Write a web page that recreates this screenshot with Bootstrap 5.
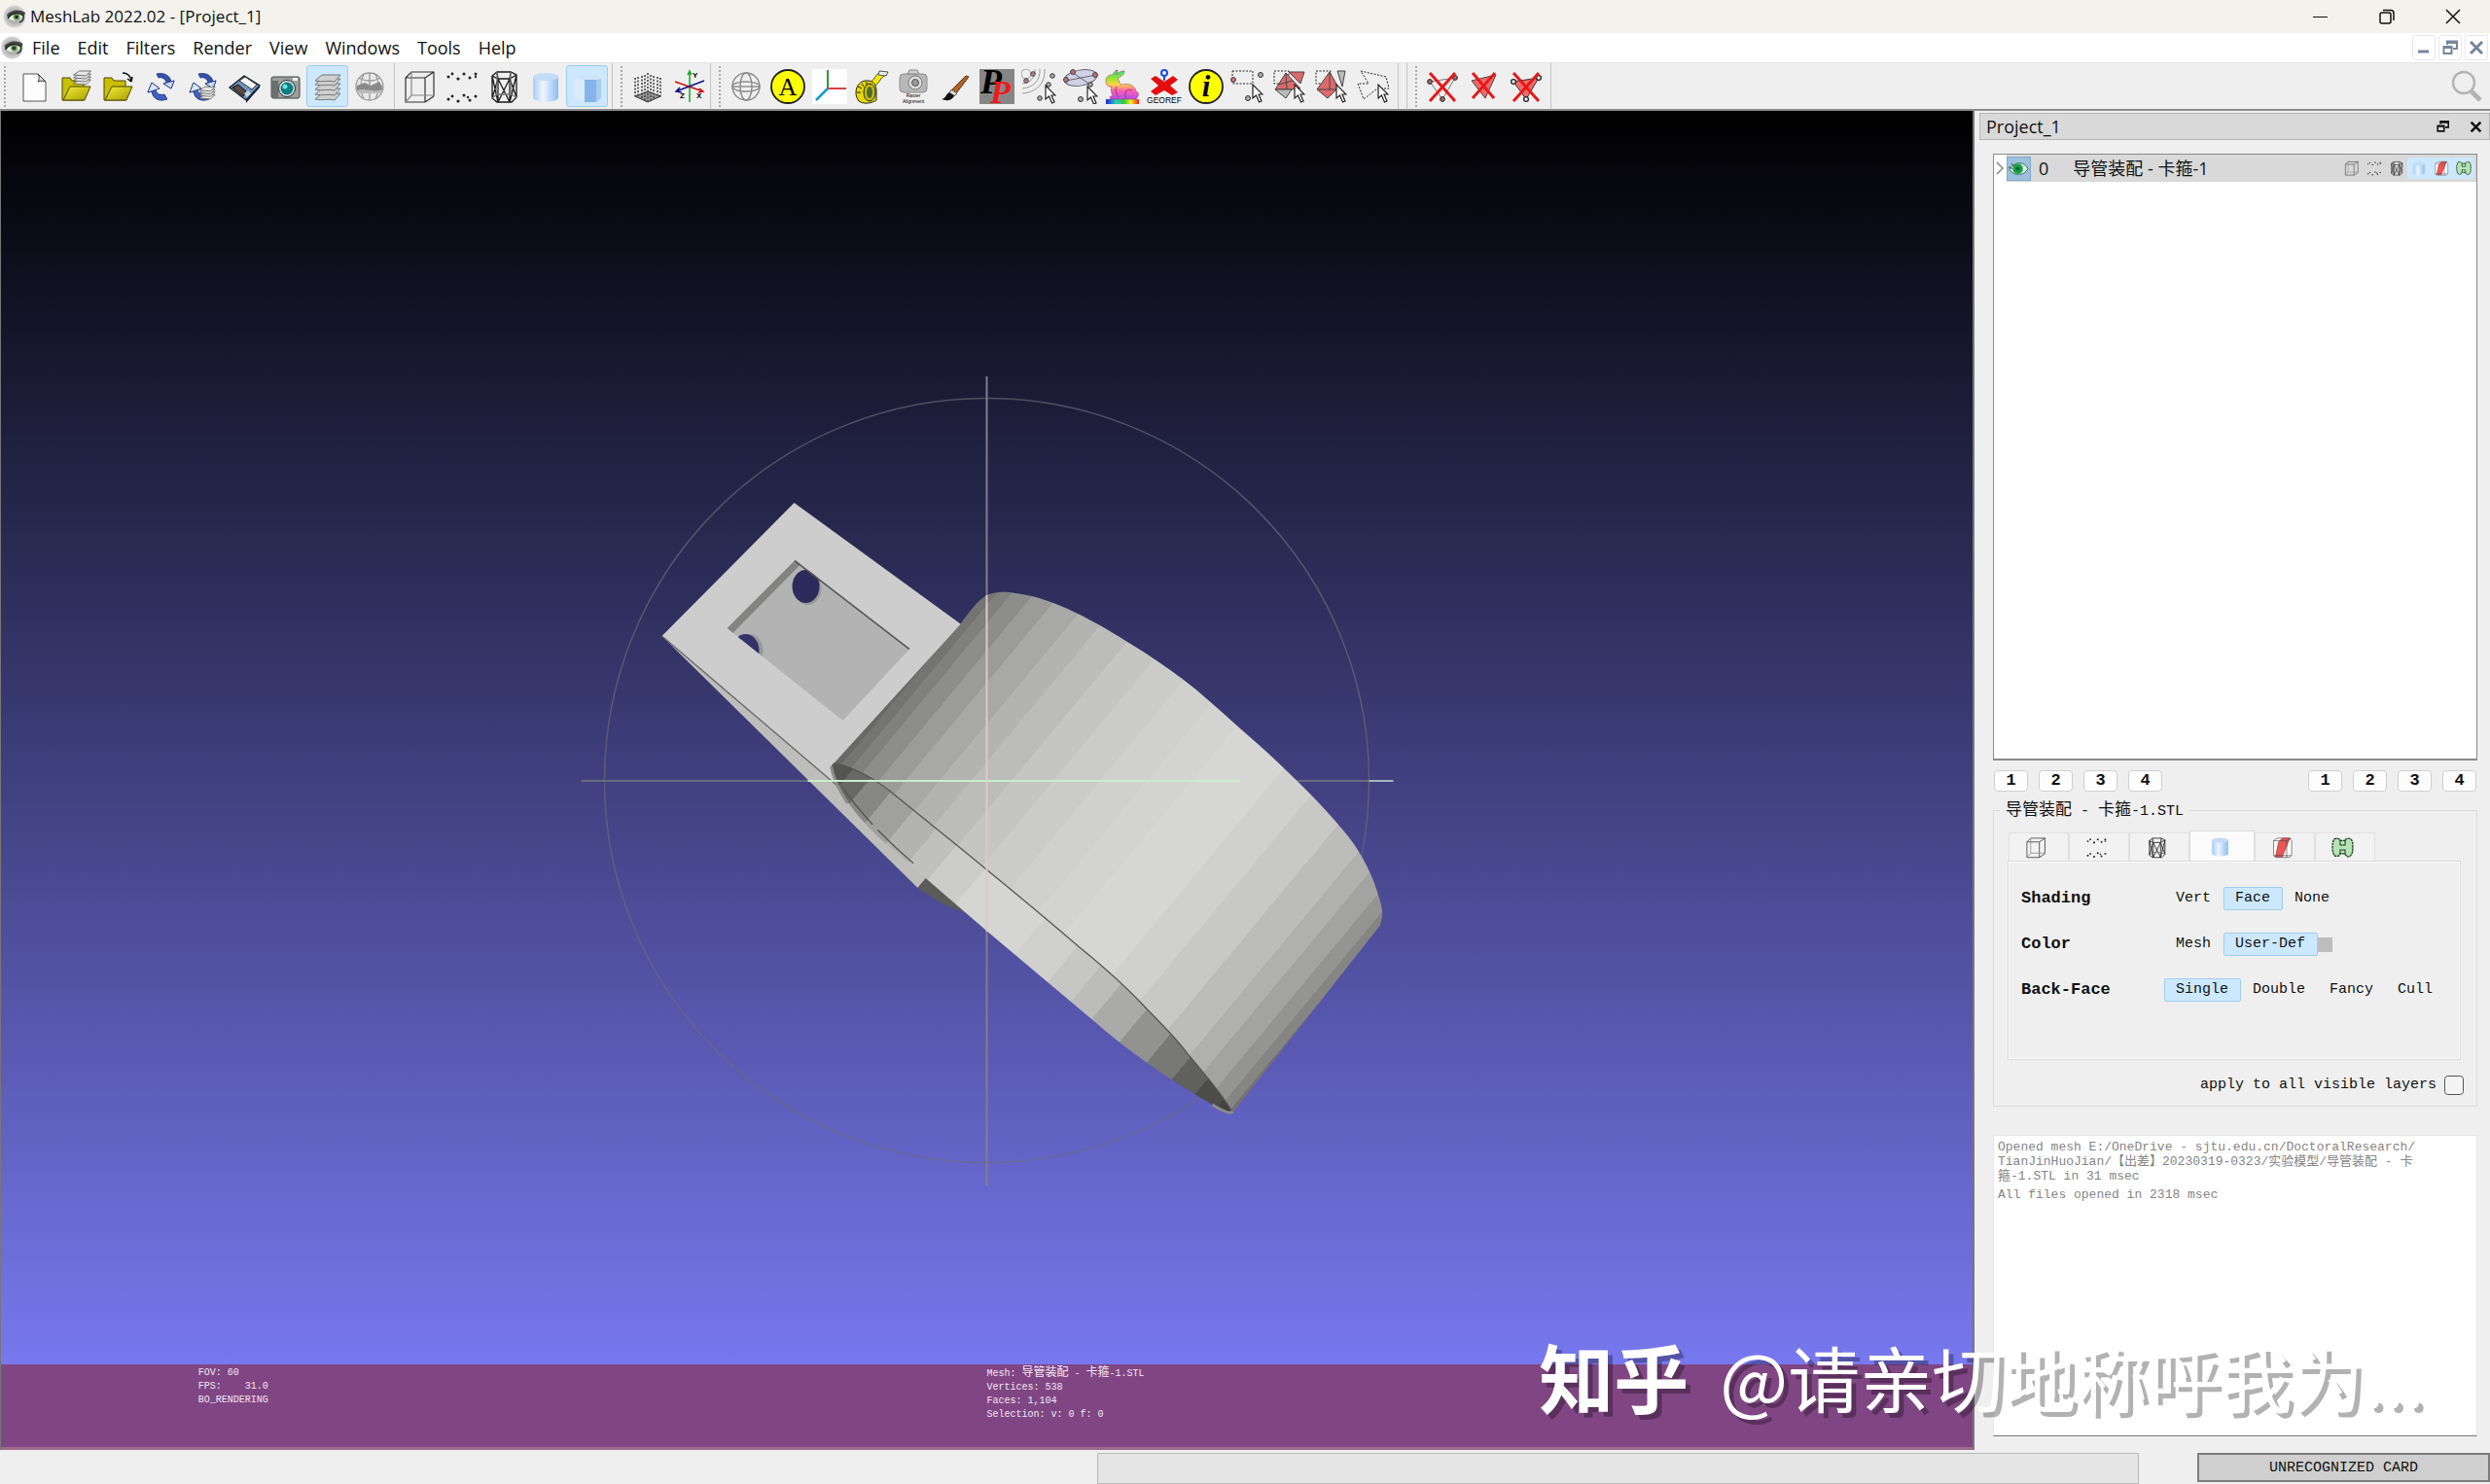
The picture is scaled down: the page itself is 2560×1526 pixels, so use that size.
<!DOCTYPE html>
<html lang="en">
<head>
<meta charset="utf-8">
<meta name="viewport" content="width=device-width, initial-scale=1">
<title>MeshLab 2022.02 - [Project_1]</title>
<link href="https://cdn.jsdelivr.net/npm/bootstrap@5.3.0/dist/css/bootstrap.min.css" rel="stylesheet">
<style>
body{font-family:"Open Sans","Noto Sans CJK SC",sans-serif;font-size:18px;line-height:24px;color:#111;background:#efefef}
svg{display:block;flex:none}
.plain{border:0;background:none;padding:0;color:inherit}
.mono{font-family:"Liberation Mono","Noto Sans CJK SC",monospace;font-size:15px}
.zh{font-size:17px}
.title-strip{height:34px;background:#f4f2ed;font-size:17px;padding-left:3px}
.win-btn{width:68px;height:34px}
.menu-strip{height:30px;background:#fff}
.menu-strip .nav{gap:2px}
.menu-strip .nav-link{padding:0 8px;color:#111;line-height:30px}
.mdi-set{gap:3px;color:#75869c;margin-right:2px}
.mdi-btn{width:24px;height:26px;border:1px solid #e4e8ee;border-radius:3px;background:#fff;color:inherit}
.tool-strip{height:50px;border-bottom:2px solid #8c8c8c;border-top:1px solid #e4e4e4}
.tool{width:43px;height:43px;border:1px solid transparent;background:none;padding:0;border-radius:3px}
.tool.on{background:#cce8ff;border-color:#99cdf2}
.vsep{width:1px;height:47px;background:#c4c4c4}
.grip{width:2px;height:42px;background:repeating-linear-gradient(#aaa 0 2px,transparent 2px 4px)}
.gl-view{background:linear-gradient(#000,#8080ff);border:solid #777;border-width:0 2px 0 1px;min-width:0}
.hud{height:88px;background:#804684;border-bottom:3px solid #9d6b8b;color:#f3e6f3;font-size:10px;line-height:14px;padding-top:2px;white-space:pre}
.hud .zh{font-size:12px}
.hud-a{padding-left:10%}
.side{width:530px;padding-left:5px}
.dock-title{height:28px;background:#d9d9d9;border:1px solid #b5b5b5;padding:0 6px;margin-top:2px}
.side-body{padding:14px 13px 14px 14px}
.layer-list{background:#fff;border:2px solid #8a8a8a;border-width:1px 1px 2px 1px}
.layer-row{height:28px;background:#d9d9d9;padding-right:2px}
.layer-name{margin-left:25px}
.eye-box{width:25px;height:25px;background:#9cc0dd;border:1px solid #82a9ca}
.mini{width:23px;height:22px;border-radius:2px}
.mini.on{background:#cce8ff}
.num-bar{margin-top:10px;padding:0 1px}
.num-set{gap:11px}
.num-btn{width:35px;height:22px;border:1px solid #cfcfcf;border-radius:4px;background:#fdfdfd;font-weight:700;line-height:18px;padding:0;font-size:17px;color:#111}
.group-box{border:1px solid #dadada;padding:0 16px 9px 14px;margin-top:19px}
.group-title{background:#efefef;padding:0 6px;margin:-12px 0 7px -8px;align-self:flex-start;line-height:24px}
.nav-tabs{border:0;padding-left:1px}
.nav-tabs .nav-link{width:62px;height:29px;padding:0 5px 0 0;border:1px solid #e0e0e0;border-bottom:0;border-radius:0;background:#f2f2f2;margin:0}
.nav-tabs .nav-link.active{width:67px;height:31px;background:#fbfbfb;border-color:#dedede}
.pane{border:1px solid #dcdcdc;box-shadow:inset 0 0 0 1px #fafafa;height:205px;padding:26px 0 0 13px}
.opt-row{height:24px;margin-bottom:23px}
.opt-name{width:147px;font-weight:700;font-size:17px}
.opt{border:1px solid transparent;border-radius:2px;padding:0 12px 0 11px;line-height:22px;height:24px}
.btn-check:checked+.opt{background:#cce8ff;border-color:#9fcdee}
.swatch{width:15px;height:15px;background:#bdbdbd;border:0;padding:0}
.apply-line{margin:14px -3px 0 0}
.apply-box{width:20px;height:20px;margin:0;border:1px solid #555;border-radius:4px;background-color:#f4f4f4}
.log-box{height:310px;margin-top:29px;background:#fff;border:1px solid #e6e6e6;border-bottom:1px solid #777;padding:4px 50px 0 4px;font-size:13px;line-height:15px;color:#858585}
.log-box p{margin:0 0 4px}
.status-strip{height:35px;padding-top:3px}
.progress-slot{width:1071px;height:32px;background:#e5e5e5;border:1px solid #b8b8b8;margin-right:60px}
.card-slot{width:301px;height:30px;background:#cfcfcf;border:2px solid #7d7d7d;text-align:center;line-height:28px}
.stamp{position:absolute;right:68px;bottom:61px;color:#fff;font-family:"Noto Sans CJK SC",sans-serif;font-size:74px;line-height:100px;text-shadow:5px 5px 0 rgba(0,0,0,.3);pointer-events:none;white-space:nowrap;gap:32px}
.stamp b{font-size:77px}
</style>
<script src="https://cdn.jsdelivr.net/npm/bootstrap@5.3.0/dist/js/bootstrap.bundle.min.js"></script>
</head>
<body>
<svg width="0" height="0" class="position-absolute" aria-hidden="true">
<defs>
<linearGradient id="gBlue"><stop offset="0" stop-color="#a9cdf4"/><stop offset=".4" stop-color="#eef6ff"/><stop offset="1" stop-color="#8dbcf0"/></linearGradient>
<linearGradient id="gFold" x1="0" y1="0" x2="1" y2="1"><stop offset="0" stop-color="#f4f03a"/><stop offset="1" stop-color="#a89c00"/></linearGradient>
<linearGradient id="gRain"><stop offset="0" stop-color="#22c"/><stop offset=".3" stop-color="#2cc"/><stop offset=".55" stop-color="#3c3"/><stop offset=".75" stop-color="#ee2"/><stop offset="1" stop-color="#e22"/></linearGradient>
<linearGradient id="gBun" x1="0" y1="0" x2="0" y2="1"><stop offset="0" stop-color="#2be08a"/><stop offset=".3" stop-color="#9be82c"/><stop offset=".5" stop-color="#ffd24a"/><stop offset=".7" stop-color="#ff5fb0"/><stop offset="1" stop-color="#b04cf0"/></linearGradient>
<radialGradient id="gEye"><stop offset="0" stop-color="#777"/><stop offset=".6" stop-color="#b5b5b5"/><stop offset="1" stop-color="#d8d8d8"/></radialGradient>
<symbol id="cursor" viewBox="0 0 12 20"><path d="M1 1v14l3.500-3 3 7 2.500-1-3-7h4z" fill="#fff" stroke="#222" stroke-width="1.200"/></symbol>
<symbol id="logo" viewBox="0 0 24 24"><circle cx="12" cy="12" r="11.500" fill="url(#gEye)"/><path d="M4 10C9 5 17 4 23 8l-1 3C16 7 9 8 5 13z" fill="#444"/><path d="M6 14c3-5 10-6 14-2-3 5-10 6-14 2z" fill="#e8efe4"/><circle cx="14" cy="12.500" r="3.300" fill="#5b9a4a"/><circle cx="14" cy="12.500" r="1.400" fill="#111"/><path d="M5 14c4-6 11-7 16-3 1 4-1 6-4 7" fill="none" stroke="#222" stroke-width="1.400"/></symbol>
<symbol id="i-new" viewBox="0 0 36 36"><path d="M6 5h15l8 8v20H6z" fill="#fdfdfd" stroke="#555"/><path d="M21 5c2 3 1 6 0 8 3-1 6-1 8 0z" fill="#ddd" stroke="#333"/></symbol>
<symbol id="i-open" viewBox="0 0 36 36"><path d="M3 9h8l2 3h12v20H3z" fill="#c9c000" stroke="#4d4700"/><path d="M4 32l7-14h21l-6 14z" fill="url(#gFold)" stroke="#4d4700"/></symbol>
<symbol id="i-sheets" viewBox="0 0 20 18"><g fill="#e4e4e4" stroke="#555" stroke-width=".8"><path d="M1 14l6-4h12l-5 5z"/><path d="M1 11l6-4h12l-5 5z"/><path d="M1 8l6-4h12l-5 5z"/><path d="M1 5l6-4h12l-5 5z"/></g></symbol>
<symbol id="i-openm" viewBox="0 0 36 36"><use href="#i-open"/><use href="#i-sheets" x="13" y="1" width="21" height="18"/></symbol>
<symbol id="i-imp" viewBox="0 0 36 36"><use href="#i-open"/><path d="M22 4c5 0 8 3 9 8m0 1l-4-3m4 3l1-5" fill="none" stroke="#111" stroke-width="1.500"/></symbol>
<symbol id="i-reload" viewBox="0 0 36 36"><path d="M14 5c8-2 14 2 15 8l3-1-3 8-8-5 3-1c-1-4-4-6-8-5z" fill="#3453ad" stroke="#1b2e73" stroke-width=".8"/><path d="M25 31c-8 3-15 0-16-8l-4 1 4-10 8 6-4 1c1 5 5 6 9 5z" fill="#3f5fc0" stroke="#1b2e73" stroke-width=".8"/><path d="M5 24l4-10 8 6z" fill="#dce6fb" stroke="#1b2e73" stroke-width=".8"/><path d="M32 12l-3 8-8-5z" fill="#cfdcf8" stroke="#1b2e73" stroke-width=".8"/></symbol>
<symbol id="i-reloadm" viewBox="0 0 36 36"><use href="#i-reload"/><use href="#i-sheets" x="14" y="17" width="18" height="17"/></symbol>
<symbol id="i-save" viewBox="0 0 36 36"><path d="M3 19L18 7l16 10-14 15z" fill="#6f96c2" stroke="#151b25" stroke-width="1.300"/><path d="M13 12l6-4 12 8-5 5z" fill="#f7f7f7" stroke="#333"/><path d="M6 19l6-3 8 7-3 5z" fill="#5a4a40" stroke="#111"/><path d="M18 25l4-3 3 3-4 4z" fill="#c9d4df"/><path d="M20 32l14-15v2L20 35z" fill="#1b2533"/></symbol>
<symbol id="i-cam" viewBox="0 0 36 36"><rect x="3" y="8" width="29" height="22" rx="2" fill="#999e9e" stroke="#444"/><rect x="3" y="12" width="7" height="17" fill="#6c6f6f"/><rect x="25" y="9" width="5" height="3" fill="#eee"/><circle cx="19" cy="20" r="8.500" fill="#ddd" stroke="#333"/><circle cx="19" cy="20" r="6.500" fill="#087f83"/><circle cx="17" cy="18" r="2.500" fill="#6fe0dd"/></symbol>
<symbol id="i-layers" viewBox="0 0 36 36"><g fill="#cfcfcf" stroke="#777" stroke-width="1"><path d="M5 31l7-6h19l-6 7c-7-2-12 1-20-1z"/><path d="M5 26l7-6h19l-6 7c-7-2-12 1-20-1z"/><path d="M5 21l7-6h19l-6 7c-7-2-12 1-20-1z"/><path d="M5 16l7-6h19l-6 7c-7-2-12 1-20-1z"/><path d="M5 12l7-6h19l-6 7c-7-2-12 1-20-1z"/></g></symbol>
<symbol id="i-globe" viewBox="0 0 36 36"><g fill="none" stroke="#8b8b8b" stroke-width="1.400"><circle cx="18" cy="18" r="14"/><ellipse cx="18" cy="18" rx="6" ry="14"/><path d="M4 18h28"/><ellipse cx="18" cy="18" rx="14" ry="5"/></g></symbol>
<symbol id="i-raster" viewBox="0 0 36 36"><g fill="#e9e9e9" stroke="#999" stroke-width="1.300"><circle cx="18" cy="18" r="14"/><path d="M18 4v28M7 9c6 4 16 4 22 0M12 5c-4 8-4 18 0 26M24 5c4 8 4 18 0 26" fill="none"/></g><path d="M5 17l8-3 6 3 9-4 3 5v7H5z" fill="#8a8a8a"/><path d="M5 22c8-3 17 3 26-1v4H5z" fill="#bbb"/></symbol>
<symbol id="i-box" viewBox="0 0 36 36"><g fill="none" stroke="#333" stroke-width="1.200"><path d="M3 9h20v25H3zM10 3h22v25M3 9l6-6h1M23 9l9-6M23 34l9-6"/><path d="M9 3v24h23M9 27l-6 7" stroke="#888"/></g></symbol>
<symbol id="i-pts" viewBox="0 0 36 36"><g fill="#222"><circle cx="4" cy="8" r="1.500"/><circle cx="8" cy="5" r="1.400"/><circle cx="14" cy="10" r="1.600"/><circle cx="20" cy="5" r="1.500"/><circle cx="26" cy="9" r="1.500"/><circle cx="32" cy="5" r="1.500"/><circle cx="32" cy="8" r="1.200"/><circle cx="4" cy="31" r="1.500"/><circle cx="8" cy="28" r="1.400"/><circle cx="14" cy="33" r="1.600"/><circle cx="20" cy="27" r="1.500"/><circle cx="26" cy="32" r="1.500"/><circle cx="32" cy="28" r="1.500"/><circle cx="24" cy="29" r="1.200"/></g></symbol>
<symbol id="i-wire" viewBox="0 0 36 36"><g fill="none" stroke="#1c1c1c" stroke-width="1.300"><path d="M6 7l5-4h14l6 3v23l-5 5H11l-5-4zM6 7l6 3h12l7-4M12 10v24M24 10v24M11 3l1 7M25 3l-1 7M6 30l6-20 12 24M24 10L12 34M31 29l-7-19M6 7l6 27M31 6l-7 28"/><path d="M11 3v23h14V3M6 30l5-4M25 26l6 3" stroke="#777"/></g></symbol>
<symbol id="i-cyl" viewBox="0 0 36 36"><path d="M5 8v22c3 5 23 5 26 0V8z" fill="url(#gBlue)"/><ellipse cx="18" cy="8" rx="13" ry="4" fill="#c3dcf7"/></symbol>
<symbol id="i-flat" viewBox="0 0 36 36"><path d="M4 10l6-4h17l5 4v20l-5 4H14l-10-4z" fill="#cfe3f8"/><path d="M4 10l11 1v23l-11-4z" fill="#dbeafb"/><path d="M15 11h12v23H15z" fill="#84b4ea"/><path d="M27 11l5-1v20l-5 4z" fill="#a9cbf1"/></symbol>
<symbol id="i-grid" viewBox="0 0 36 36"><path d="M5 28l13-5 13 5-13 6z" fill="#999" stroke="#333"/><g fill="none" stroke="#444" stroke-width="1.600" stroke-dasharray="2 1.500"><path d="M5 9v20M8 8v22M12 7v24M15 6v26M18 4v29M21 6v26M24 7v24M28 8v22M31 9v20"/></g></symbol>
<symbol id="i-axes" viewBox="0 0 36 36"><g fill="none" stroke-width="1.500"><path d="M18 34V3m-2 3l2-4 2 4" stroke="#19a82a"/><path d="M3 13l29 10m-4-3l4 3-5 1" stroke="#c11"/><path d="M33 12L4 23m4-4l-4 4 6 1" stroke="#118"/></g><g font-family="Liberation Sans" font-size="8" font-weight="700"><text x="21" y="9">Y</text><text x="8" y="30">Z</text><text x="25" y="30">X</text></g></symbol>
<symbol id="i-A" viewBox="0 0 36 36"><circle cx="18" cy="18" r="17" fill="#ff0" stroke="#222" stroke-width="1.800"/><text x="18" y="27" font-family="Liberation Serif" font-size="26" text-anchor="middle">A</text></symbol>
<symbol id="i-info" viewBox="0 0 36 36"><circle cx="18" cy="18" r="17" fill="#ff0" stroke="#222" stroke-width="1.800"/><text x="18" y="28" font-family="Liberation Serif" font-size="31" font-weight="700" font-style="italic" text-anchor="middle">i</text></symbol>
<symbol id="i-tri" viewBox="0 0 36 36"><path d="M0 0h36v36H0z" fill="#fff"/><g fill="none" stroke-width="2"><path d="M16 20V1" stroke="#2a9b3f"/><path d="M16 20h19" stroke="#d8404a"/><path d="M16 20L4 32" stroke="#159ccb" stroke-width="2.500"/></g></symbol>
<symbol id="i-tape" viewBox="0 0 36 36"><path d="M12 13c9 2 8-6 15-10l7 3c-8 1-7 12-17 12z" fill="#f1ea00" stroke="#444"/><path d="M26 2l9 1-2 4-8-1z" fill="#eee" stroke="#555"/><path d="M2 24c0-8 6-13 13-12 6 1 8 5 8 10v10c-6 4-14 4-18 1-2-3-3-5-3-9z" fill="#e6d900" stroke="#222"/><ellipse cx="16" cy="24" rx="6" ry="9" fill="#c5bd00" stroke="#222"/><ellipse cx="16" cy="24" rx="3" ry="6" fill="#4f6d30"/><path d="M4 18l4 2m-5 4h4m1-9l2 3m3-5v3" stroke="#222"/></symbol>
<symbol id="i-align" viewBox="0 0 36 36"><rect x="4" y="5" width="28" height="19" rx="4" fill="#b8b8b8" stroke="#8b8b8b"/><path d="M12 5l2-4h8l2 4z" fill="#ccc" stroke="#888"/><circle cx="20" cy="14" r="7" fill="#ddd" stroke="#777"/><circle cx="20" cy="14" r="3.500" fill="#999" stroke="#555"/><g font-family="Liberation Sans" font-size="5" text-anchor="middle"><text x="18" y="29">Raster</text><text x="18" y="35">Alignment</text></g></symbol>
<symbol id="i-brush" viewBox="0 0 36 36"><path d="M14 22L29 7l3 1-13 17z" fill="#b0622a" stroke="#5a2f0e"/><path d="M14 21l6 4-3 3-5-3z" fill="#ddd" stroke="#555"/><path d="M12 24l5 3c-2 6-8 6-13 4 5-1 4-5 8-7z" fill="#111"/></symbol>
<symbol id="i-pp" viewBox="0 0 36 36"><path d="M0 0h36v36H0z" fill="#868686"/><g font-family="Liberation Serif" font-weight="700" font-style="italic"><text x="1" y="25" font-size="36">P</text><text x="11" y="35" font-size="34" fill="#f01818">P</text></g></symbol>
<symbol id="i-rings" viewBox="0 0 36 36"><g fill="none" stroke="#9a9a9a"><circle cx="5" cy="5" r="5"/><path d="M14 0c1 9-5 14-13 15M19 0c1 12-7 19-18 20M24 0c1 15-9 24-23 25"/></g><g fill="#b9808a" stroke="#444"><circle cx="12" cy="5" r="2.300"/><circle cx="5" cy="12" r="2.300"/></g><g fill="#aaa" stroke="#333"><circle cx="32" cy="7" r="2.300"/><circle cx="28" cy="16" r="2.300"/><circle cx="19" cy="30" r="2.300"/></g><use href="#cursor" x="24" y="16" width="12" height="20"/></symbol>
<symbol id="i-ell" viewBox="0 0 36 36"><ellipse cx="18" cy="9" rx="17" ry="8" transform="rotate(-10 18 9)" fill="#cfd2e6" stroke="#666"/><path d="M10 4l18 12M3 12L34 6" stroke="#666"/><g fill="#b9707a" stroke="#444"><circle cx="3" cy="11" r="2.500"/><circle cx="10" cy="3" r="2.500"/><circle cx="33" cy="6" r="2.500"/></g><g fill="#aaa" stroke="#333"><circle cx="28" cy="16" r="2.300"/><circle cx="18" cy="31" r="2.500"/></g><use href="#cursor" x="24" y="17" width="12" height="20"/></symbol>
<symbol id="i-bunny" viewBox="0 0 36 36"><path d="M1 31h34v5H1z" fill="url(#gRain)"/><path d="M1 12c0-4 3-6 7-6 1-3 3-5 5-5 0 2-1 4-2 5 3-3 6-4 9-4 0 4-4 6-7 7 2 3 1 6 4 7 8-2 14 1 15 7 3 1 3 3 2 5l-2 3H6c-2-1-1-3 2-4-2-3-2-6-1-9-4 1-6-2-6-6z" fill="url(#gBun)" stroke="#a45" stroke-width=".6"/><path d="M22 30c-4-6 2-11 6-8M12 18c-2 4 0 8 2 11" fill="none" stroke="#903c70"/></symbol>
<symbol id="i-geo" viewBox="0 0 36 36"><path d="M4 10l5-3 9 6 9-6 5 4-8 6 8 7-6 3-8-5-9 5-5-4 8-6z" fill="#e60d0d"/><circle cx="18" cy="4" r="3" fill="none" stroke="#1d4fe0" stroke-width="2"/><path d="M18 7v5" stroke="#1d4fe0" stroke-width="2"/><text x="18" y="35" font-family="Liberation Sans" font-size="8.500" text-anchor="middle">GEOREF</text></symbol>
<symbol id="i-selv" viewBox="0 0 36 36"><path d="M2 2h21v13H2z" fill="none" stroke="#222" stroke-dasharray="2 1.500"/><circle cx="3" cy="11" r="2.500" fill="#d07070" stroke="#444"/><g fill="#aaa" stroke="#333"><circle cx="31" cy="6" r="2.500"/><circle cx="18" cy="30" r="2.500"/></g><use href="#cursor" x="22" y="15" width="12" height="20"/></symbol>
<symbol id="i-self" viewBox="0 0 36 36"><path d="M2 2h15v13H2z" fill="none" stroke="#222" stroke-dasharray="2 1.500"/><path d="M3 21L14 4l15 16-9 1z" fill="#dd6a6a" stroke="#444"/><path d="M17 3h16l-4 12z" fill="#dd6a6a" stroke="#444"/><path d="M3 21h17l-6 9z" fill="#bbb" stroke="#444"/><path d="M14 4l1 17m-9-5l15-4" stroke="#444"/><use href="#cursor" x="22" y="15" width="12" height="20"/></symbol>
<symbol id="i-selc" viewBox="0 0 36 36"><path d="M2 2h15v13H2z" fill="none" stroke="#222" stroke-dasharray="2 1.500"/><path d="M3 21L16 3l9 16-11 11z" fill="#dd6a6a" stroke="#444"/><path d="M3 21h21M16 3v18" stroke="#444"/><path d="M24 2h8l-3 16z" fill="#bbb" stroke="#444"/><use href="#cursor" x="22" y="15" width="12" height="20"/></symbol>
<symbol id="i-poly" viewBox="0 0 36 36"><path d="M5 2l26 6 3 12-12 0-14 11-6-16h11z" fill="none" stroke="#222" stroke-dasharray="2 1.500"/><use href="#cursor" x="22" y="15" width="12" height="20"/></symbol>
<symbol id="i-x" viewBox="0 0 36 36"><path d="M5 4l26 29M31 4L5 33" stroke="#e81818" stroke-width="3"/></symbol>
<symbol id="i-delv" viewBox="0 0 36 36"><path d="M5 13l26-4-13 22z" fill="#eee" stroke="#777"/><g fill="#a06a6a" stroke="#222"><circle cx="5" cy="13" r="2.400"/><circle cx="31" cy="9" r="2.400"/><circle cx="18" cy="31" r="2.400"/></g><use href="#i-x"/></symbol>
<symbol id="i-delf" viewBox="0 0 36 36"><path d="M5 12l25-6-11 24z" fill="#f06a6a" stroke="#444"/><path d="M6 4l22 26M29 4L6 30" stroke="#e81818" stroke-width="3"/></symbol>
<symbol id="i-delb" viewBox="0 0 36 36"><path d="M5 13l26-4-13 22z" fill="#f06a6a" stroke="#333"/><g fill="#eee" stroke="#222" stroke-width="1.300"><circle cx="5" cy="13" r="2.400"/><circle cx="31" cy="9" r="2.400"/><circle cx="18" cy="31" r="2.400"/></g><use href="#i-x"/></symbol>
<symbol id="i-red" viewBox="0 0 36 36"><path d="M4 7l6-4h20l3 4v24l-4 3H7l-3-3z" fill="#fff" stroke="#444"/><path d="M12 9L18 3h12L18 33H7z" fill="#ea5555" stroke="#933"/><path d="M4 7h21v27M25 7l7-4M4 31h28" fill="none" stroke="#444"/></symbol>
<symbol id="i-bnd" viewBox="0 0 36 36"><path d="M5 4c5-2 8 0 9 3h8c1-3 4-5 9-3 3 3 4 9 3 14 1 6-1 11-4 14-4 2-7 0-8-4h-8c-1 4-5 5-9 3-4-4-5-22 0-27z" fill="#b5e3b6" stroke="#1c3a1f" stroke-width="2" stroke-dasharray="4 1"/><path d="M14 5v9h8V5m-8 24v-7h8v7" fill="none" stroke="#1c3a1f" stroke-width="1.600"/></symbol>
<symbol id="i-eye" viewBox="0 0 24 24"><path d="M2 13c3-5 7-7 11-7s7 2 9 6c-3 5-6 6-10 6s-7-1-10-5z" fill="#d8eedd" stroke="#3a6a50"/><circle cx="11" cy="12" r="5.500" fill="#18a04c"/><circle cx="11" cy="12" r="2.200" fill="#063"/><path d="M1 10l4 2M4 6l3 4" stroke="#26543d"/></symbol>
<symbol id="i-restore" viewBox="0 0 16 16"><path d="M5 5V1.500h10V9h-4M5 3h10" fill="none" stroke="currentColor" stroke-width="2"/><path d="M1.500 7h8v7h-8zM1.500 8h8" fill="none" stroke="currentColor" stroke-width="2"/></symbol>
<symbol id="i-close" viewBox="0 0 16 16"><path d="M2 2l12 12M14 2L2 14" stroke="currentColor" stroke-width="3"/></symbol>
</defs>
</svg>

<div class="vh-100 d-flex flex-column overflow-hidden position-relative">
  <header>
    <div class="title-strip d-flex align-items-center">
      <svg width="24" height="24"><use href="#logo"/></svg>
      <span class="ms-1">MeshLab 2022.02 - [Project_1]</span>
      <div class="ms-auto d-flex">
        <button class="plain win-btn d-flex justify-content-center align-items-center" aria-label="Minimize"><svg width="16" height="16"><path d="M0 8.500h15" stroke="#111"/></svg></button>
        <button class="plain win-btn d-flex justify-content-center align-items-center" aria-label="Restore"><svg width="16" height="16" fill="none" stroke="#111" stroke-width="1.500"><rect x="1" y="4" width="11" height="11" rx="2"/><path d="M4 1.500h8q3 0 3 3V12"/></svg></button>
        <button class="plain win-btn d-flex justify-content-center align-items-center me-1" aria-label="Close"><svg width="16" height="16"><path d="M1 1l14 14M15 1L1 15" stroke="#111" stroke-width="1.500"/></svg></button>
      </div>
    </div>
    <div class="menu-strip d-flex align-items-center">
      <svg width="25" height="24"><use href="#logo"/></svg>
      <nav class="nav">
        <a class="nav-link" href="#">File</a><a class="nav-link" href="#">Edit</a><a class="nav-link" href="#">Filters</a><a class="nav-link" href="#">Render</a><a class="nav-link" href="#">View</a><a class="nav-link" href="#">Windows</a><a class="nav-link" href="#">Tools</a><a class="nav-link" href="#">Help</a>
      </nav>
      <div class="mdi-set ms-auto d-flex">
        <button class="mdi-btn p-0 d-flex justify-content-center align-items-center" aria-label="Minimize project"><svg width="16" height="16"><path d="M2 12h11" stroke="currentColor" stroke-width="3"/></svg></button>
        <button class="mdi-btn p-0 d-flex justify-content-center align-items-center" aria-label="Restore project"><svg width="16" height="16"><use href="#i-restore"/></svg></button>
        <button class="mdi-btn p-0 d-flex justify-content-center align-items-center" aria-label="Close project"><svg width="16" height="16"><use href="#i-close"/></svg></button>
      </div>
    </div>
    <div class="tool-strip d-flex align-items-center">
      <div class="d-flex align-items-center" id="tools"></div>
      <button class="plain ms-auto me-2" aria-label="Search"><svg width="32" height="34" fill="none" stroke="#b4b4b4"><circle cx="13" cy="13" r="11" stroke-width="2.500"/><path d="M21 22l9 9" stroke-width="5"/></svg></button>
    </div>
  </header>

  <main class="flex-grow-1 d-flex" style="min-height:0">
    <section class="gl-view flex-grow-1 position-relative d-flex flex-column justify-content-end overflow-hidden">
      <svg class="position-absolute top-0 start-0 w-100 h-100" viewBox="0 114 2030 1377" preserveAspectRatio="xMidYMid slice">
        <defs>
          <linearGradient id="outer" gradientUnits="userSpaceOnUse" x1="0" y1="0" x2="1540" y2="1280"></linearGradient>
          <linearGradient id="inner" gradientUnits="userSpaceOnUse" x1="0" y1="0" x2="1540" y2="1280"></linearGradient>
          <clipPath id="recess"><path d="M818 576L936 667 867 741 748 646z"/></clipPath>
        </defs>
        <circle cx="1015" cy="802.500" r="393" fill="none" stroke="#6c6c78" stroke-opacity=".65" stroke-width="1.500"/>
        <path d="M598 803H1433" stroke="#77777f" stroke-width="1.500"/>
        <path d="M1408 803h25" stroke="#b9cfd0" stroke-width="1.500"/>
        <path d="M681 654L944 913 955 900 870 800z" fill="#bdbdbb"/>
        <path d="M944 913L955 900 996 940Q970 932 944 913z" fill="#5b5b5a"/>
        <path d="M817 517L990 643 900 760 866 812 681 654z" fill="#cdcdcd"/>
        <path d="M681 654L866 812" stroke="#666" stroke-width="1.300"/>
        <g clip-path="url(#recess)">
          <path d="M740 570h200v175H740z" fill="#b3b3b3"/>
          <path d="M745 649L818 573 824 580 753 652z" fill="#838382"/>
          <ellipse cx="831" cy="605" rx="14" ry="17" fill="#999"/>
          <ellipse cx="829" cy="603" rx="14" ry="17" fill="#2d2b5c"/>
          <ellipse cx="771" cy="669" rx="14" ry="17" fill="#999"/>
          <ellipse cx="767" cy="669" rx="14" ry="17" fill="#343268"/>
          <path d="M818 576L936 667" stroke="#555" stroke-width="3"/>
        </g>
        <path d="M855 788C862 815 880 838 905 862Q960 910 1017 959L1124 1049Q1175 1094 1247 1136 1262 1146 1268 1144L1262 1090 1100 900 960 780 858 784z" fill="url(#inner)"/>
        <path d="M855 788L987 643C998 628 1005 618 1015 612 1024 608 1034 608 1045 610 1085 615 1130 641 1166 664 1184 675 1200 686 1216 698 1236 713 1254 730 1272 746 1294 765 1316 785 1336 805 1354 822 1370 840 1385 858 1402 879 1413 903 1419 925 1423 938 1422 945 1419 952L1268 1144C1258 1127 1242 1108 1221 1083 1210 1068 1196 1054 1180 1038 1158 1014 1135 994 1109 973 1080 948 1050 923 1017 896 985 869 950 842 915 813 900 801 885 792 868 787 862 785 858 785 855 788z" fill="url(#outer)"/>
        <path d="M858 786C864 786 870 788 876 790 890 796 902 803 915 813 950 842 985 869 1017 896 1050 923 1080 948 1109 973 1135 994 1158 1014 1180 1038 1196 1054 1210 1068 1221 1083 1242 1108 1258 1127 1267 1143" fill="none" stroke="#555" stroke-width="1.300"/>
        <path d="M855 788Q858 805 872 826M1247 1136Q1265 1147 1268 1143" fill="none" stroke="#8c8c8a" stroke-width="3"/>
        <path d="M866 809Q895 850 941 889" fill="none" stroke="#555" stroke-width="1.300" stroke-dasharray="50 8"/>
        <path d="M1015 387V612M1015 958V1219" stroke="#847c8c" stroke-width="2"/>
        <path d="M1015 612V958" stroke="#dfc9c4" stroke-width="2"/>
        <path d="M831 803H1276" stroke="#c9eecb" stroke-width="1.800"/>
      </svg>
      <div class="hud mono position-relative d-flex">
        <div class="w-50 hud-a">FOV: 60
FPS:    31.0
BO_RENDERING</div>
        <div class="w-50">Mesh: <span class="zh">导管装配</span> - <span class="zh">卡箍</span>-1.STL
Vertices: 538
Faces: 1,104
Selection: v: 0 f: 0</div>
      </div>
    </section>

    <aside class="side d-flex flex-column flex-shrink-0">
      <div class="dock-title d-flex align-items-center">
        <span>Project_1</span>
        <button class="plain ms-auto me-3" aria-label="Float panel"><svg width="13" height="14"><use href="#i-restore"/></svg></button>
        <button class="plain ms-1" aria-label="Close panel"><svg width="15" height="13"><use href="#i-close"/></svg></button>
      </div>
      <div class="side-body flex-grow-1 d-flex flex-column">
        <div class="layer-list flex-grow-1">
          <div class="layer-row d-flex align-items-center">
            <svg width="13" height="28" class="bg-white"><path d="M3 8l6 6-6 6" fill="none" stroke="#888" stroke-width="1.500"/></svg>
            <div class="eye-box"><svg width="23" height="23"><use href="#i-eye"/></svg></div>
            <span class="ms-2">0</span>
            <span class="layer-name">导管装配 - 卡箍-1</span>
            <div class="ms-auto d-flex" id="minis"></div>
          </div>
        </div>
        <div class="num-bar d-flex justify-content-between mono">
          <div class="num-set d-flex"><button class="num-btn">1</button><button class="num-btn">2</button><button class="num-btn">3</button><button class="num-btn">4</button></div>
          <div class="num-set d-flex"><button class="num-btn">1</button><button class="num-btn">2</button><button class="num-btn">3</button><button class="num-btn">4</button></div>
        </div>
        <section class="group-box mono d-flex flex-column">
          <div class="group-title"><span class="zh">导管装配</span> - <span class="zh">卡箍</span>-1.STL</div>
          <div class="nav nav-tabs align-items-end" id="tabs" role="tablist"></div>
          <div class="pane">
            <div class="opt-row d-flex align-items-center"><span class="opt-name">Shading</span>
              <input class="btn-check" type="radio" name="shade" id="s1"><label class="opt" for="s1">Vert</label>
              <input class="btn-check" type="radio" name="shade" id="s2" checked><label class="opt" for="s2">Face</label>
              <input class="btn-check" type="radio" name="shade" id="s3"><label class="opt" for="s3">None</label></div>
            <div class="opt-row d-flex align-items-center"><span class="opt-name">Color</span>
              <input class="btn-check" type="radio" name="tint" id="c1"><label class="opt" for="c1">Mesh</label>
              <input class="btn-check" type="radio" name="tint" id="c2" checked><label class="opt" for="c2">User-Def</label>
              <button class="swatch" aria-label="Pick colour"></button></div>
            <div class="opt-row d-flex align-items-center"><span class="opt-name">Back-Face</span>
              <input class="btn-check" type="radio" name="back" id="b1" checked><label class="opt" for="b1">Single</label>
              <input class="btn-check" type="radio" name="back" id="b2"><label class="opt" for="b2">Double</label>
              <input class="btn-check" type="radio" name="back" id="b3"><label class="opt" for="b3">Fancy</label>
              <input class="btn-check" type="radio" name="back" id="b4"><label class="opt" for="b4">Cull</label></div>
          </div>
          <div class="apply-line d-flex justify-content-end align-items-center gap-2">
            <label for="applyAll">apply to all visible layers</label>
            <input class="form-check-input apply-box" type="checkbox" id="applyAll">
          </div>
        </section>
        <div class="log-box mono">
          <p>Opened mesh E:/OneDrive - sjtu.edu.cn/DoctoralResearch/<br>TianJinHuoJian/【出差】20230319-0323/实验模型/导管装配 - 卡<br>箍-1.STL in 31 msec</p>
          <p>All files opened in 2318 msec</p>
        </div>
      </div>
    </aside>
  </main>

  <footer class="status-strip d-flex justify-content-end mono">
    <div class="progress-slot"></div>
    <div class="card-slot">UNRECOGNIZED CARD</div>
  </footer>

  <div class="stamp d-flex align-items-center"><b>知乎</b><span>@请亲切地称呼我为...</span></div>
</div>

<script>
const icon = (id, w) => `<svg width="${w}" height="${w}"><use href="#i-${id}"/></svg>`;
const sep = m => `<div class="vsep ${m}"></div>`;
const grip = '<div class="grip mx-1"></div>';
const tools = (names, on = []) => names.split(' ').map(n =>
  `<button class="tool d-flex justify-content-center align-items-center${on.includes(n) ? ' on' : ''}" aria-label="${n}">${icon(n, 36)}</button>`).join('');
document.getElementById('tools').innerHTML =
  grip + '<span class="ms-1"></span>' + tools('new openm imp reload reloadm save cam layers raster', ['layers']) +
  sep('mx-1') + tools('box pts wire cyl flat', ['flat']) +
  sep('mx-1') + grip + tools('grid axes') +
  sep('me-1') + grip + tools('globe A tri tape align brush pp rings ell bunny geo info selv self selc poly') +
  sep('mx-1') + sep('mx-1') + grip + tools('delv delf delb') + sep('ms-1');

const modes = ['box', 'pts', 'wire', 'cyl', 'red', 'bnd'];
document.getElementById('minis').innerHTML = modes.map((m, i) =>
  `<div class="mini d-flex justify-content-center align-items-center${i > 2 ? ' on' : ''}">${icon(m, 16)}</div>`).join('');
document.getElementById('tabs').innerHTML = modes.map(m =>
  `<button class="nav-link d-flex justify-content-center align-items-center${m === 'cyl' ? ' active' : ''}" role="tab" aria-label="${m}">${icon(m, 23)}</button>`).join('');

// Facet shading: [end of strip along the gradient axis, grey level]
const axis = 2002;
const strips = {
  outer: [[1168,104],[1178,116],[1190,128],[1208,141],[1229,155],[1256,168],[1281,179],[1313,188],[1346,197],[1383,203],[1420,208],[1455,211],[1520,214],[1559,208],[1600,200],[1634,188],[1656,176],[1677,163],[1692,148],[1702,133],[1720,115]],
  inner: [[1180,84],[1200,104],[1225,135],[1255,160],[1285,179],[1312,192],[1350,204],[1430,213],[1474,207],[1505,198],[1533,188],[1570,170],[1605,146],[1636,120],[1664,96],[1690,76],[1730,66]]
};
for (const [id, list] of Object.entries(strips)) {
  let from = 1100, stops = '';
  for (const [to, g] of list) {
    const c = `rgb(${g},${g},${g - 1})`;
    stops += `<stop offset="${from / axis}" stop-color="${c}"/><stop offset="${to / axis}" stop-color="${c}"/>`;
    from = to;
  }
  document.getElementById(id).innerHTML = stops;
}
</script>
</body>
</html>
